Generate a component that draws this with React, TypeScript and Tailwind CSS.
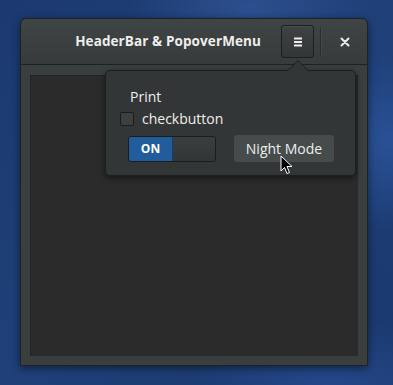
import React from "react";

export default function App() {
  return (
    <div
      className="relative w-[393px] h-[385px] overflow-hidden pt-[18px] pl-[20px]"
      style={{
        background:
          "radial-gradient(ellipse 120px 80px at 250px 10px, #2c4f8f 0%, rgba(44,79,143,0) 100%), radial-gradient(ellipse 140px 90px at 393px 140px, #2a5196 0%, rgba(42,81,150,0) 100%), radial-gradient(ellipse 140px 70px at 330px 385px, #24488a 0%, rgba(36,72,138,0) 100%), linear-gradient(135deg, #1c3a70 0%, #1f4079 50%, #1a386e 100%)",
        fontFamily: '"Open Sans", "DejaVu Sans", sans-serif',
      }}
    >
      <div className="relative w-[348px] h-[348px] rounded-t-[6px] bg-[#393f3f] shadow-[0_2px_8px_rgba(0,0,0,0.5)] border border-[#1e2222] flex flex-col">
        {/* header */}
        <div className="h-[46px] flex items-center border-b border-[#1f2222] rounded-t-[6px] bg-gradient-to-b from-[#3f4444] to-[#373b3b] shrink-0">
          <div className="flex-1 flex justify-end pr-[20px]">
            <span className="text-[13.5px] font-bold text-[#eeeeec] tracking-[0.1px]">
              HeaderBar &amp; PopoverMenu
            </span>
          </div>
          <div className="w-[33px] h-[33px] rounded-[3px] border border-[#1c1f1f] bg-gradient-to-b from-[#3e4242] to-[#333636] flex items-center justify-center shadow-[inset_0_1px_0_rgba(255,255,255,0.06)]">
            <svg width="10" height="10" viewBox="0 0 10 10">
              <rect x="1" y="0.5" width="8" height="2" fill="#eeeeec" />
              <rect x="1" y="4" width="8" height="2" fill="#eeeeec" />
              <rect x="1" y="7.5" width="8" height="2" fill="#eeeeec" />
            </svg>
          </div>
          <div className="w-px h-[30px] bg-[#2a2e2e] ml-[6px] mr-[1px] shadow-[1px_0_0_rgba(255,255,255,0.05)]" />
          <div className="w-[45px] flex items-center justify-center">
            <svg width="10" height="10" viewBox="0 0 10 10">
              <path d="M1.5 1.5 L8.5 8.5 M8.5 1.5 L1.5 8.5" stroke="#eeeeec" strokeWidth="2" strokeLinecap="round" />
            </svg>
          </div>
        </div>
        {/* body */}
        <div className="flex-1 pt-[10px] px-[9px] pb-[9px]">
          <div className="w-full h-full bg-[#2b2b2b] border-t border-l border-[#232323]" />
        </div>
      </div>

      {/* popover */}
      <div className="absolute left-[105px] top-[70px] w-[251px] h-[106px] rounded-[5px] bg-[#333636] border border-[#1c1f1f] shadow-[0_2px_6px_rgba(0,0,0,0.5)] pl-[14px] pt-[16px] text-[#eeeeec]">
        <svg className="absolute left-[181px] top-[-11px]" width="22" height="12" viewBox="0 0 22 12">
          <path d="M0 11.5 L11 0.5 L22 11.5" fill="#333636" stroke="#1c1f1f" strokeWidth="1" />
          <rect x="0" y="11" width="22" height="2" fill="#333636" />
        </svg>
        <div className="pl-[10px] text-[14px] leading-[20px] h-[22px]">Print</div>
        <div className="flex items-center h-[18px] mt-[1px]">
          <div className="w-[14px] h-[14px] rounded-[2px] bg-[#3c4040] border border-[#1a1d1d] ml-[0px]" />
          <span className="ml-[8px] text-[14px] leading-[18px]">checkbutton</span>
        </div>
        <div className="flex items-center mt-[7px] ml-[8px]">
          <div className="w-[88px] h-[26px] rounded-[3px] border border-[#1a1d1d] flex overflow-hidden bg-[#2d3030]">
            <div className="w-[44px] h-full bg-[#215d9c] flex items-center justify-center text-[12px] font-bold text-white border-r border-[#1a3e66]">
              ON
            </div>
            <div className="flex-1 bg-gradient-to-b from-[#3a3e3e] to-[#323535]" />
          </div>
          <div className="ml-[18px] w-[100px] h-[27px] rounded-[3px] bg-[#464b4b] flex items-center justify-center text-[14px]">
            Night Mode
          </div>
        </div>
      </div>

      {/* cursor */}
      <svg className="absolute left-[280px] top-[155px]" width="14" height="21" viewBox="0 0 14 21">
        <path
          d="M1 1 L1 16 L4.5 12.5 L7 18.5 L9.5 17.5 L7 11.5 L12 11.5 Z"
          fill="#000"
          stroke="#fff"
          strokeWidth="1"
          strokeLinejoin="round"
        />
      </svg>
    </div>
  );
}
